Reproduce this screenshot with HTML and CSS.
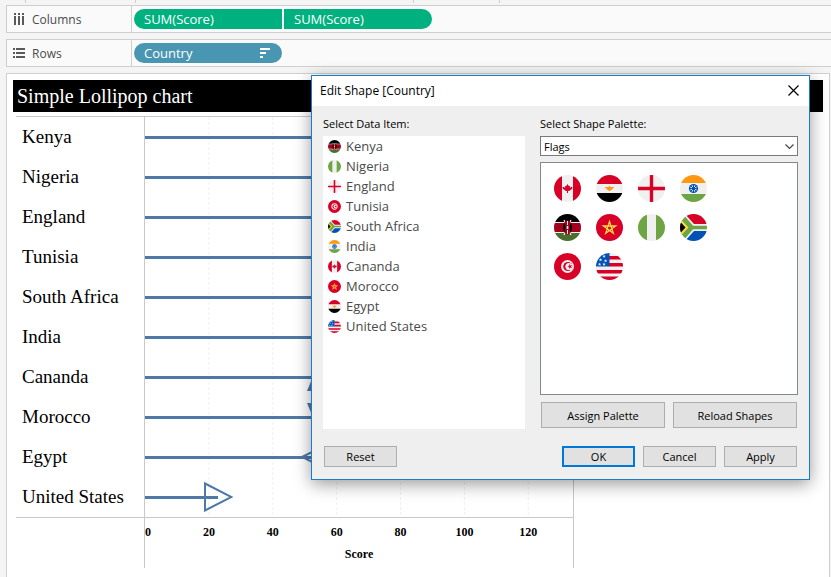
FILE: index.html
```html
<!DOCTYPE html>
<html lang="en">
<head>
    <meta charset="UTF-8">
    <meta name="viewport" content="width=device-width, initial-scale=1.0">
    <title>Simple Lollipop chart</title>
    <link rel="stylesheet" href="styles.css">
</head>
<body>

    <!-- Flag shapes, drawn once and reused in the list and the palette -->
    <svg class="defs" aria-hidden="true">
        <defs>
            <clipPath id="round"><circle cx="13.5" cy="13.5" r="13.5"/></clipPath>
        </defs>
        <symbol id="canada" viewBox="0 0 27 27">
            <g clip-path="url(#round)">
                <path fill="#f0f0f0" d="M0 0h27v27H0z"/>
                <path fill="#d80027" d="M0 0h8v27H0zM19 0h8v27h-8z"/>
                <path fill="#d80027" d="M13.5 9l1.4 2.2 1.2-.5-.3 2.3 1.6-1.2 1.2.7-.7 1.6-2.9 2h-1v2h-1v-2h-1l-2.9-2-.7-1.6 1.2-.7 1.6 1.2-.3-2.3 1.2.5z"/>
            </g>
        </symbol>
        <symbol id="egypt" viewBox="0 0 27 27">
            <g clip-path="url(#round)">
                <path fill="#f0f0f0" d="M0 0h27v27H0z"/>
                <path fill="#d80027" d="M0 0h27v9H0z"/>
                <path fill="#000" d="M0 18h27v9H0z"/>
                <path fill="#ff9811" d="M9 12h3.5l1-1.5 1 1.5H18l-.7 1.4-1.2.3-.5 1.3-2.1 1-2.1-1-.5-1.3-1.2-.3z"/>
            </g>
        </symbol>
        <symbol id="england" viewBox="0 0 27 27">
            <g clip-path="url(#round)">
                <path fill="#f0f0f0" d="M0 0h27v27H0z"/>
                <path fill="#d80027" d="M11.800 0h3.400v11.800H27v3.400H15.200V27h-3.400V15.200H0v-3.400h11.800z"/>
            </g>
        </symbol>
        <symbol id="india" viewBox="0 0 27 27">
            <g clip-path="url(#round)">
                <path fill="#f0f0f0" d="M0 0h27v27H0z"/>
                <path fill="#ff9811" d="M0 0h27v8H0z"/>
                <path fill="#6da544" d="M0 19h27v8H0z"/>
                <circle cx="13.5" cy="13.5" r="4.6" fill="#0052b4"/>
                <circle cx="13.5" cy="13.5" r="3.2" fill="#d5e0ee"/>
                <path stroke="#0052b4" d="M13.5 10v7M10 13.5h7M11 11l5 5M16 11l-5 5"/>
                <circle cx="13.5" cy="13.5" r="1.3" fill="#0052b4"/>
            </g>
        </symbol>
        <symbol id="kenya" viewBox="0 0 27 27">
            <g clip-path="url(#round)">
                <path fill="#f0f0f0" d="M0 0h27v27H0z"/>
                <path fill="#000" d="M0 0h27v8H0z"/>
                <path fill="#a2001d" d="M0 9h27v9H0z"/>
                <path fill="#496e2d" d="M0 19h27v8H0z"/>
                <path stroke="#f0f0f0" stroke-width="1.2" d="M10 6l7 15M17 6l-7 15"/>
                <path fill="#a2001d" d="M13.5 6c3 1.500 4.500 4 4.500 7.500s-1.500 6-4.500 7.500c-3-1.500-4.500-4-4.500-7.500S10.500 7.500 13.500 6z"/>
                <path fill="#000" d="M10.500 8.500c-2 3-2 7 0 10 1.200-3 1.200-7 0-10zM16.500 8.500c2 3 2 7 0 10-1.200-3-1.200-7 0-10z"/>
                <path fill="#f0f0f0" d="M13 7h1v4h-1zM13 16h1v4h-1zM12.700 12h1.600v3h-1.600z"/>
            </g>
        </symbol>
        <symbol id="morocco" viewBox="0 0 27 27">
            <circle cx="13.5" cy="13.5" r="13.5" fill="#d80027"/>
            <path fill="none" stroke="#ffda44" stroke-width="1.3" d="M13.5 7.500l3.800 11.700-9.900-7.200h12.200l-9.900 7.200z"/>
        </symbol>
        <symbol id="nigeria" viewBox="0 0 27 27">
            <g clip-path="url(#round)">
                <path fill="#f0f0f0" d="M0 0h27v27H0z"/>
                <path fill="#6da544" d="M0 0h9v27H0zM18 0h9v27h-9z"/>
            </g>
        </symbol>
        <symbol id="southafrica" viewBox="0 0 27 27">
            <g clip-path="url(#round)">
                <path fill="#f0f0f0" d="M0 0h27v27H0z"/>
                <path fill="#d80027" d="M5 0h22v10H14z"/>
                <path fill="#0052b4" d="M5 27h22V17H14z"/>
                <path fill="#6da544" d="M0 0h3l10 11.700h14v3.600H13L3 27H0z"/>
                <path fill="#ffda44" d="M0 4.500l8.500 9L0 22.500z"/>
                <path fill="#000" d="M0 7.500l5.500 6L0 19.500z"/>
            </g>
        </symbol>
        <symbol id="tunisia" viewBox="0 0 27 27">
            <circle cx="13.5" cy="13.5" r="13.5" fill="#d80027"/>
            <circle cx="13.5" cy="13.5" r="6.500" fill="#f0f0f0"/>
            <circle cx="13.800" cy="13.5" r="4.600" fill="#d80027"/>
            <circle cx="15" cy="13.5" r="3.600" fill="#f0f0f0"/>
            <path fill="#d80027" d="M15.500 10.800l.9 1.600 1.800-.4-1.200 1.500 1.200 1.500-1.800-.4-.9 1.600-.3-1.900-1.700-.8 1.700-.8z"/>
        </symbol>
        <symbol id="usa" viewBox="0 0 27 27">
            <g clip-path="url(#round)">
                <path fill="#f0f0f0" d="M0 0h27v27H0z"/>
                <path fill="#d80027" d="M13 3h14v3.500H13zM13 10h14v3.500H13zM0 17h27v3.500H0zM0 23.500h27V27H0z"/>
                <path fill="#0052b4" d="M0 0h13.500v13.500H0z"/>
                <path fill="#f0f0f0" d="M8 1.500l.5 1.200h1.300l-1 .8.4 1.200-1.200-.7-1.100.7.4-1.200-1-.8h1.300zM4.500 5l.5 1.200h1.300l-1 .8.4 1.200-1.200-.7-1.100.7.4-1.200-1-.8h1.300zM9.500 6l.5 1.200h1.300l-1 .8.4 1.200-1.200-.7-1.100.7.4-1.200-1-.8h1.300zM3.500 9.500l.5 1.200h1.300l-1 .8.4 1.200-1.200-.7-1.100.7.4-1.200-1-.8h1.300zM8 9.500l.5 1.200h1.300l-1 .8.4 1.200-1.200-.7-1.100.7.4-1.200-1-.8h1.300z"/>
            </g>
        </symbol>
    </svg>

    <div class="toolbar-edge">
        <span class="edge-first"></span>
        <span class="edge-second"></span>
        <span class="edge-third"></span>
    </div>

    <section class="shelf">
        <div class="shelf-label">
            <svg width="12" height="13" viewBox="0 0 12 13" fill="#5a5a5a"><path d="M1 0h2v2H1zM5 0h2v2H5zM9 0h2v2H9zM1 3h2v9H1zM5 3h2v9H5zM9 3h2v9H9z"/></svg>
            Columns
        </div>
        <div class="pills">
            <button type="button" class="pill pill-left">SUM(Score)</button>
            <button type="button" class="pill pill-right">SUM(Score)</button>
        </div>
    </section>

    <section class="shelf">
        <div class="shelf-label">
            <svg width="12" height="13" viewBox="0 0 12 13" fill="#5a5a5a"><path d="M0 1h2v2H0zM3 1h9v2H3zM0 5h2v2H0zM3 5h9v2H3zM0 9h2v2H0zM3 9h9v2H3z"/></svg>
            Rows
        </div>
        <div class="pills">
            <button type="button" class="pill pill-blue">Country
                <svg width="10" height="10" viewBox="0 0 10 10" fill="#fff"><path d="M0 0h10v2H0zM0 4h6v2H0zM0 8h3v2H0z"/></svg>
            </button>
        </div>
    </section>

    <main class="viz">
        <h1>Simple Lollipop chart</h1>

        <div class="chart">
            <div class="names">
                <div>Kenya</div>
                <div>Nigeria</div>
                <div>England</div>
                <div>Tunisia</div>
                <div>South Africa</div>
                <div>India</div>
                <div>Cananda</div>
                <div>Morocco</div>
                <div>Egypt</div>
                <div>United States</div>
            </div>
            <div class="pane">
                <svg class="grid" width="100%" height="100%" aria-hidden="true">
                    <g stroke="#f0f0f0" stroke-dasharray="3 2">
                        <line x1="14.93%" y1="0" x2="14.93%" y2="100%"/>
                        <line x1="29.85%" y1="0" x2="29.85%" y2="100%"/>
                        <line x1="44.78%" y1="0" x2="44.78%" y2="100%"/>
                        <line x1="59.7%" y1="0" x2="59.7%" y2="100%"/>
                        <line x1="74.63%" y1="0" x2="74.63%" y2="100%"/>
                        <line x1="89.55%" y1="0" x2="89.55%" y2="100%"/>
                    </g>
                </svg>
                <div class="row"><span class="stick" style="width: 90%"></span></div>
                <div class="row"><span class="stick" style="width: 84%"></span></div>
                <div class="row"><span class="stick" style="width: 78%"></span></div>
                <div class="row"><span class="stick" style="width: 72%"></span></div>
                <div class="row"><span class="stick" style="width: 66%"></span></div>
                <div class="row"><span class="stick" style="width: 60%"></span></div>
                <div class="row">
                    <span class="stick" style="width: 41%"></span>
                    <svg class="mark" width="30" height="40" viewBox="0 0 30 40"><path fill="#4e79a7" d="M2 34l5-12 5 12zM15 18.500h15v3H15z"/></svg>
                </div>
                <div class="row">
                    <span class="stick" style="width: 41%"></span>
                    <svg class="mark" width="30" height="40" viewBox="0 0 30 40"><path fill="#4e79a7" d="M2 6l5 12 5-12zM15 18.500h15v3H15z"/></svg>
                </div>
                <div class="row">
                    <span class="stick" style="width: 40%"></span>
                    <svg class="mark" width="30" height="30" viewBox="0 0 30 30"><path fill="none" stroke="#4e79a7" stroke-width="2" d="M1 15l14-7 14 7-14 7z"/></svg>
                </div>
                <div class="row">
                    <span class="stick" style="width: 17%"></span>
                    <svg class="mark" width="30" height="30" viewBox="0 0 30 30"><path fill="none" stroke="#4e79a7" stroke-width="2" d="M2 1.500L28.500 15 2 28.500z"/></svg>
                </div>
            </div>
            <div class="corner"></div>
            <div class="axis">
                <div class="ticks">
                    <span>0</span>
                    <span>20</span>
                    <span>40</span>
                    <span>60</span>
                    <span>80</span>
                    <span>100</span>
                    <span>120</span>
                </div>
                <div class="axis-title">Score</div>
            </div>
        </div>
    </main>

    <div class="dialog" role="dialog" aria-labelledby="dialogTitle">
        <div class="titlebar">
            <h2 id="dialogTitle">Edit Shape [Country]</h2>
            <button type="button" class="close" aria-label="Close">
                <svg width="11" height="11" viewBox="0 0 11 11"><path stroke="#000" stroke-width="1.200" d="M.5.5l10 10M10.500.5l-10 10"/></svg>
            </button>
        </div>

        <div class="columns">
            <div class="items">
                <h3>Select Data Item:</h3>
                <ul>
                    <li><svg><use href="#kenya"/></svg>Kenya</li>
                    <li><svg><use href="#nigeria"/></svg>Nigeria</li>
                    <li><svg><use href="#england"/></svg>England</li>
                    <li><svg><use href="#tunisia"/></svg>Tunisia</li>
                    <li><svg><use href="#southafrica"/></svg>South Africa</li>
                    <li><svg><use href="#india"/></svg>India</li>
                    <li><svg><use href="#canada"/></svg>Cananda</li>
                    <li><svg><use href="#morocco"/></svg>Morocco</li>
                    <li><svg><use href="#egypt"/></svg>Egypt</li>
                    <li><svg><use href="#usa"/></svg>United States</li>
                </ul>
            </div>

            <div class="shapes">
                <label for="palette">Select Shape Palette:</label>
                <div class="select">
                    <select id="palette">
                        <option>Flags</option>
                    </select>
                    <svg width="9" height="6" viewBox="0 0 9 6"><path fill="none" stroke="#444" stroke-width="1.200" d="M.5.5l4 4 4-4"/></svg>
                </div>
                <div class="palette">
                    <button type="button" aria-label="Canada"><svg><use href="#canada"/></svg></button>
                    <button type="button" aria-label="Egypt"><svg><use href="#egypt"/></svg></button>
                    <button type="button" aria-label="England"><svg><use href="#england"/></svg></button>
                    <button type="button" aria-label="India"><svg><use href="#india"/></svg></button>
                    <button type="button" aria-label="Kenya"><svg><use href="#kenya"/></svg></button>
                    <button type="button" aria-label="Morocco"><svg><use href="#morocco"/></svg></button>
                    <button type="button" aria-label="Nigeria"><svg><use href="#nigeria"/></svg></button>
                    <button type="button" aria-label="South Africa"><svg><use href="#southafrica"/></svg></button>
                    <button type="button" aria-label="Tunisia"><svg><use href="#tunisia"/></svg></button>
                    <button type="button" aria-label="United States"><svg><use href="#usa"/></svg></button>
                </div>
                <div class="palette-actions">
                    <button type="button" class="btn">Assign Palette</button>
                    <button type="button" class="btn">Reload Shapes</button>
                </div>
            </div>
        </div>

        <div class="footer">
            <button type="button" class="btn reset">Reset</button>
            <button type="button" class="btn ok">OK</button>
            <button type="button" class="btn">Cancel</button>
            <button type="button" class="btn">Apply</button>
        </div>
    </div>

</body>
</html>
```
FILE: styles.css
```css
* {
    margin: 0;
    padding: 0;
    box-sizing: border-box;
}

body {
    min-height: 100vh;
    display: flex;
    flex-direction: column;
    padding-left: 6px;
    background: #f4f4f4;
    font-family: "Open Sans", "Noto Sans", sans-serif;
    font-size: 12px;
    overflow: hidden;
}

button, select {
    font: inherit;
    color: inherit;
}

.defs {
    position: absolute;
    width: 0;
    height: 0;
}

/* Bottom edge of the toolbar */
.toolbar-edge {
    display: flex;
    height: 3px;
    margin-bottom: 2px;
    padding-left: 19px;
}

.toolbar-edge span {
    border-left: 1px solid #cfcfcf;
}

.edge-first {
    width: 110px;
}

.edge-second {
    width: 278px;
}

.edge-third {
    width: 87px;
    border-right: 1px solid #cfcfcf;
}

/* Shelves */
.shelf {
    display: flex;
    height: 28px;
    margin-bottom: 6px;
    border: 1px solid #cfcfcf;
    border-right: none;
    background: #fafafa;
}

.shelf-label {
    display: flex;
    align-items: center;
    gap: 7px;
    width: 125px;
    padding-left: 6px;
    border-right: 1px solid #cfcfcf;
    color: #4a4a4a;
    font-size: 12px;
}

.pills {
    display: flex;
    align-items: center;
    gap: 2px;
    padding-left: 2px;
}

.pill {
    display: flex;
    align-items: center;
    justify-content: space-between;
    width: 148px;
    height: 20px;
    padding: 0 12px 0 10px;
    border: none;
    background: #00b180;
    color: #fff;
    font-size: 13px;
}

.pill-left {
    border-radius: 10px 0 0 10px;
}

.pill-right {
    border-radius: 0 10px 10px 0;
}

.pill-blue {
    border-radius: 10px;
    background: #4996b2;
}

/* Worksheet */
.viz {
    flex: 1;
    margin-right: 1px;
    padding: 6px;
    border: 1px solid #cfcfcf;
    border-bottom: none;
    background: #fff;
    color: #000;
    font-family: "Liberation Serif", "Times New Roman", serif;
}

.viz h1 {
    height: 32px;
    padding-left: 4px;
    background: #000;
    color: #fff;
    font-size: 20px;
    font-weight: normal;
    line-height: 32px;
}

.chart {
    display: grid;
    grid-template-columns: 128px minmax(0, 430px);
    margin: 4px 0 0 3px;
}

.names,
.pane {
    border-top: 1px solid #c8c8c8;
    border-bottom: 1px solid #c8c8c8;
}

.names {
    padding-left: 6px;
    font-size: 19px;
    line-height: 40px;
}

.pane,
.axis {
    border-left: 1px solid #c8c8c8;
    border-right: 1px solid #c8c8c8;
}

.pane {
    position: relative;
}

.grid {
    position: absolute;
    left: 0;
    top: 0;
}

.row {
    position: relative;
    display: flex;
    align-items: center;
    height: 40px;
}

.stick {
    height: 3px;
    background: #4e79a7;
}

.mark {
    margin-left: -15px;
}

.axis {
    height: 50px;
    font-weight: bold;
}

.ticks {
    display: flex;
    line-height: 28px;
}

.ticks span {
    flex: 0 0 14.93%;
    margin-left: -7.46%;
    margin-right: 7.46%;
    text-align: center;
}

.ticks span:first-child {
    flex-basis: 7.47%;
    margin-left: 0;
    text-align: left;
}

.axis-title {
    text-align: center;
    line-height: 16px;
}

/* Edit Shape window */
.dialog {
    position: absolute;
    left: 311px;
    top: 75px;
    width: 499px;
    border: 1px solid #1a7bc8;
    background: #efefef;
    color: #000;
    font-size: 11px;
    box-shadow: 0 4px 16px rgba(0, 0, 0, 0.4);
}

.titlebar {
    display: flex;
    align-items: center;
    justify-content: space-between;
    height: 30px;
    padding: 0 10px 2px 8px;
    background: #fff;
}

.titlebar h2 {
    font-size: 12px;
    font-weight: normal;
}

.close {
    display: flex;
    border: none;
    background: none;
}

.columns {
    display: flex;
    gap: 15px;
    padding: 10px 11px 0;
}

.items {
    flex: 0 0 202px;
    display: flex;
    flex-direction: column;
}

.items h3,
.shapes label {
    display: block;
    height: 20px;
    font-size: 11px;
    font-weight: normal;
    line-height: 16px;
}

.items ul {
    height: 293px;
    background: #fff;
    color: #4a4a4a;
    list-style: none;
}

.items li {
    display: flex;
    align-items: center;
    gap: 5px;
    height: 20px;
    padding-left: 5px;
    font-size: 13px;
}

.items li svg {
    width: 13px;
    height: 13px;
}

.shapes {
    flex: 1;
}

.select {
    position: relative;
    height: 20px;
}

.select select {
    width: 100%;
    height: 20px;
    padding-left: 3px;
    border: 1px solid #7a7a7a;
    border-radius: 0;
    background: #fff;
    appearance: none;
}

.select svg {
    position: absolute;
    right: 4px;
    top: 8px;
    pointer-events: none;
}

.palette {
    display: grid;
    grid-template-columns: repeat(auto-fill, 27px);
    align-content: start;
    gap: 12px 15px;
    height: 233px;
    margin-top: 6px;
    padding: 12px 80px 12px 13px;
    border: 1px solid #828790;
    background: #fff;
}

.palette button {
    border: none;
    background: none;
}

.palette svg {
    display: block;
    width: 27px;
    height: 27px;
}

.palette-actions {
    display: grid;
    grid-template-columns: 1fr 1fr;
    gap: 8px;
    padding: 7px 1px 0;
}

.btn {
    height: 21px;
    border: 1px solid #adadad;
    background: #e1e1e1;
}

.palette-actions .btn {
    height: 26px;
}

.footer {
    display: flex;
    gap: 8px;
    padding: 17px 12px 12px;
}

.footer .btn {
    width: 73px;
}

.footer .reset {
    margin-right: auto;
}

.footer .ok {
    border: 2px solid #0078d7;
}
```
